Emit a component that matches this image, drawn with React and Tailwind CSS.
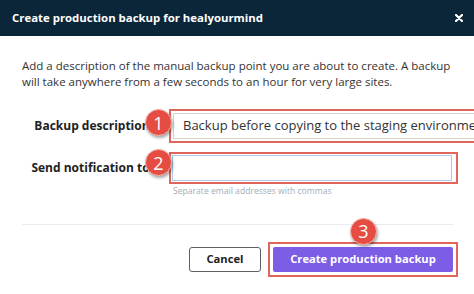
import React from 'react'

function Badge({ n, className }) {
  return (
    <div className={`absolute w-[27px] h-[27px] rounded-full bg-[#e54d43] border border-[#f6b3ad] shadow-[1px_2px_3px_rgba(0,0,0,0.35)] flex items-center justify-center text-white text-[18px] leading-none ${className}`}>
      {n}
    </div>
  )
}

export default function App() {
  return (
    <div className="w-[474px] h-[294px] bg-white overflow-hidden font-['Open_Sans',sans-serif] text-[#2b2b2b]">
      {/* Header */}
      <div className="h-[36px] bg-[#0b2638] flex items-center justify-between pl-[12px] pr-[11px]">
        <span className="text-white text-[11.4px] font-bold">Create production backup for healyourmind</span>
        <svg width="8" height="8" viewBox="0 0 8 8">
          <path d="M1 1l6 6M7 1L1 7" stroke="white" strokeWidth="2.2" strokeLinecap="round" />
        </svg>
      </div>

      {/* Body */}
      <div className="pl-[22px] pr-[16px]">
        <p className="mt-[22px] text-[11.5px] leading-[16px] text-[#333]">
          Add a description of the manual backup point you are about to create. A backup will take anywhere from a few seconds to an hour for very large sites.
        </p>

        <div className="mt-[19px] flex items-center">
          <label className="w-[131px] shrink-0 text-right text-[12px] font-bold whitespace-nowrap text-[#222]">Backup description:</label>
          <div className="relative ml-[16px] flex-1 border-2 border-[#e0665c] p-[2px] pr-[4px]">
            <Badge n="1" className="left-[-26px] top-[-2px]" />
            <div className="h-[26px] border border-[#d4d4d4] pl-[9px] flex items-center overflow-hidden whitespace-nowrap text-[13px] text-[#333]">
              Backup before copying to the staging environment
            </div>
          </div>
        </div>

        <div className="mt-[9px] flex items-center">
          <label className="w-[131px] shrink-0 text-right text-[12px] font-bold whitespace-nowrap text-[#222]">Send notification to:</label>
          <div className="relative ml-[16px] flex-1 border-2 border-[#e0665c] p-[1px] pr-[4px]">
            <Badge n="2" className="left-[-26px] top-[-5px]" />
            <div className="h-[26px] border border-[#a9cbe6]" />
          </div>
        </div>
        <div className="ml-[151px] mt-[1px] text-[8.6px] text-[#a3adb8]">Separate email addresses with commas</div>

        <div className="mt-[26px] mr-[5px] h-px bg-[#e9ecef]" />

        <div className="mt-[17px] flex justify-end items-center">
          <button className="w-[72px] h-[25px] border-[1.5px] border-[#5a5f66] rounded-[3px] text-[11.2px] font-bold text-[#222] flex items-center justify-center">
            Cancel
          </button>
          <div className="relative ml-[7px] border-2 border-[#e0665c] p-[3px] pr-[3px]">
            <Badge n="3" className="left-[80px] top-[-26px]" />
            <button className="w-[180px] h-[25px] bg-[#7b5de6] rounded-[2px] text-white text-[11.2px] font-bold flex items-center justify-center">
              Create production backup
            </button>
          </div>
        </div>
      </div>
    </div>
  )
}
